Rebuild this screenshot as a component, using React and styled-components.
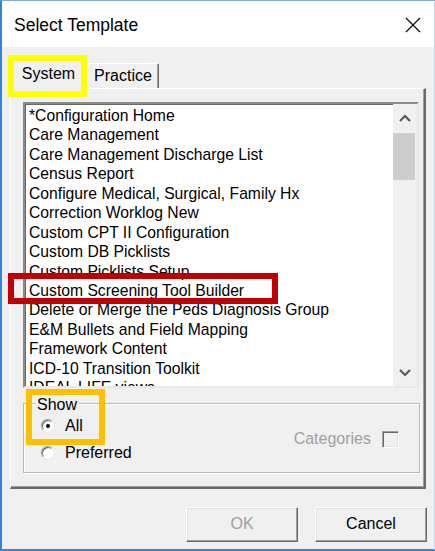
import React from "react";
import styled, { createGlobalStyle } from "styled-components";

const Global = createGlobalStyle`
  html, body { margin: 0; padding: 0; background: #f0f0f0; }
  body { font-family: "Liberation Sans", Arial, sans-serif; }
  * { box-sizing: border-box; }
`;

const Window = styled.div`
  position: relative;
  width: 435px;
  height: 551px;
  display: flex;
  flex-direction: column;
  border-left: 2px solid #2d87dc;
  border-top: 1px solid #7fa9d6;
  border-bottom: 2px solid #2d87dc;
  border-right: 1px solid #cfd8e2;
  background: #f0f0f0;
  overflow: hidden;
`;

const TitleBar = styled.div`
  height: 46px;
  flex: none;
  background: #ffffff;
  display: flex;
  align-items: center;
  justify-content: space-between;
  padding: 2px 13px 0 12px;
`;

const Title = styled.div`
  font-size: 17.5px;
  color: #000;
`;

const CloseIcon = styled.svg`
  width: 16px;
  height: 16px;
  display: block;
`;

const Body = styled.div`
  flex: 1;
  display: flex;
  flex-direction: column;
  padding: 14px 8px 7px 8px;
`;

const TabStrip = styled.div`
  display: flex;
  align-items: flex-end;
  height: 27px;
  position: relative;
  z-index: 1;
`;

const Tab = styled.div`
  height: ${(p) => (p.$active ? "28px" : "25px")};
  margin-bottom: ${(p) => (p.$active ? "-1px" : "0")};
  width: ${(p) => p.$w}px;
  padding-top: 3px;
  line-height: 18px;
  font-size: 16px;
  color: #000;
  text-align: center;
  background: #f0f0f0;
  border-top: 1px solid #ffffff;
  border-left: 1px solid #ffffff;
  border-right: 1px solid #696969;
  box-shadow: inset -1px 0 0 #a0a0a0;
  border-top-left-radius: 2px;
  border-top-right-radius: 2px;
`;

const TabPanel = styled.div`
  height: 401px;
  width: 416px;
  display: flex;
  flex-direction: column;
  padding: 13px 5px 14px 12px;
  border-top: 1px solid #ffffff;
  border-left: 1px solid #ffffff;
  border-right: 2px solid #696969;
  border-bottom: 2px solid #696969;
  box-shadow: inset -1px -1px 0 #a0a0a0;
`;

const ListBox = styled.div`
  width: 396px;
  height: 286px;
  flex: none;
  display: flex;
  background: #ffffff;
  border-top: 2px solid #8c8c8c;
  border-left: 2px solid #8c8c8c;
  border-right: 2px solid #e8e8e8;
  border-bottom: 2px solid #e8e8e8;
  box-shadow: inset 1px 1px 0 #696969;
`;

const Items = styled.div`
  flex: 1;
  overflow: hidden;
  padding: 2px 0 0 4px;
`;

const Item = styled.div`
  font-size: 15.7px;
  line-height: 19.44px;
  height: 19.44px;
  white-space: nowrap;
  color: #000;
`;

const ScrollBar = styled.div`
  width: 24px;
  flex: none;
  display: flex;
  flex-direction: column;
  background: #f0f0f0;
`;

const ArrowButton = styled.div`
  height: 27px;
  flex: none;
  display: flex;
  align-items: center;
  justify-content: center;
`;

const Track = styled.div`
  flex: 1;
  display: flex;
  flex-direction: column;
  padding: 2px 2px 0 0;
`;

const Thumb = styled.div`
  height: 47px;
  background: #cdcdcd;
`;

const GroupBox = styled.fieldset`
  margin: 6px 0 0 0;
  width: 397px;
  height: 79px;
  padding: 0 20px 6px 11px;
  border: 1px solid #b9b9b9;
  box-shadow: inset 1px 1px 0 #ffffff, 1px 1px 0 #ffffff;
  display: flex;
  align-items: center;
  min-width: 0;
`;

const Legend = styled.legend`
  font-size: 16px;
  line-height: 14px;
  padding: 4px 2px 0 2px;
  background: #f0f0f0;
  color: #000;
`;

const RadioColumn = styled.div`
  display: flex;
  flex-direction: column;
  align-self: flex-start;
  margin-left: 6px;
`;

const RadioRow = styled.label`
  height: 27px;
  display: flex;
  align-items: center;
  gap: 11px;
  font-size: 16px;
  color: #000;
`;

const RadioCircle = styled.span`
  width: 13px;
  height: 13px;
  border-radius: 50%;
  background: #ffffff;
  border: 1px solid;
  border-color: #a0a0a0 #ffffff #ffffff #a0a0a0;
  box-shadow: inset 1px 1px 0 #696969, 0 0 0 0.5px #e3e3e3;
  display: flex;
  align-items: center;
  justify-content: center;
  flex: none;
`;

const RadioDot = styled.span`
  width: 4px;
  height: 4px;
  border-radius: 50%;
  background: #000;
`;

const Spacer = styled.div`
  flex: 1;
`;

const CategoryLabel = styled.span`
  font-size: 16px;
  color: #a0a0a0;
  margin-right: 11px;
`;

const CheckBox = styled.span`
  width: 17px;
  height: 17px;
  flex: none;
  background: #f0f0f0;
  border-top: 1px solid #a0a0a0;
  border-left: 1px solid #a0a0a0;
  border-right: 1px solid #ffffff;
  border-bottom: 1px solid #ffffff;
  box-shadow: inset 1px 1px 0 #696969, inset -1px -1px 0 #e3e3e3;
`;

const ButtonRow = styled.div`
  display: flex;
  justify-content: flex-end;
  gap: 17px;
  margin-top: 18px;
  margin-right: -1px;
`;

const Button = styled.div`
  width: 112px;
  height: 35px;
  display: flex;
  align-items: center;
  justify-content: center;
  padding-bottom: 2px;
  font-size: 16px;
  color: ${(p) => (p.$disabled ? "#a0a0a0" : "#000")};
  background: #f0f0f0;
  border-top: 1px solid #ffffff;
  border-left: 1px solid #ffffff;
  border-right: 1px solid #696969;
  border-bottom: 1px solid #696969;
  box-shadow: inset -1px -1px 0 #a0a0a0, inset 1px 1px 0 #e3e3e3;
`;

const Highlight = styled.div`
  position: absolute;
  left: ${(p) => p.$x}px;
  top: ${(p) => p.$y}px;
  width: ${(p) => p.$w}px;
  height: ${(p) => p.$h}px;
  border: 6px solid ${(p) => p.$color};
  pointer-events: none;
  z-index: 5;
`;

const Chevron = ({ up }) => (
  <svg width="12" height="8" viewBox="0 0 12 8">
    <polyline
      points={up ? "1,7 6,2 11,7" : "1,1 6,6 11,1"}
      fill="none"
      stroke="#5a5a5a"
      strokeWidth="2.2"
    />
  </svg>
);

const items = [
  "*Configuration Home",
  "Care Management",
  "Care Management Discharge List",
  "Census Report",
  "Configure Medical, Surgical, Family Hx",
  "Correction Worklog New",
  "Custom CPT II Configuration",
  "Custom DB Picklists",
  "Custom Picklists Setup",
  "Custom Screening Tool Builder",
  "Delete or Merge the Peds Diagnosis Group",
  "E&M Bullets and Field Mapping",
  "Framework Content",
  "ICD-10 Transition Toolkit",
  "IDEAL LIFE views",
];

export default function App() {
  return (
    <>
      <Global />
      <Window>
        <TitleBar>
          <Title>Select Template</Title>
          <CloseIcon viewBox="0 0 16 16">
            <path d="M1 1 L15 15 M15 1 L1 15" stroke="#111" strokeWidth="1.3" />
          </CloseIcon>
        </TitleBar>
        <Body>
          <TabStrip>
            <Tab $active $w={77}>System</Tab>
            <Tab $w={72}>Practice</Tab>
          </TabStrip>
          <TabPanel>
            <ListBox>
              <Items>
                {items.map((t) => (
                  <Item key={t}>{t}</Item>
                ))}
              </Items>
              <ScrollBar>
                <ArrowButton>
                  <Chevron up />
                </ArrowButton>
                <Track>
                  <Thumb />
                </Track>
                <ArrowButton>
                  <Chevron />
                </ArrowButton>
              </ScrollBar>
            </ListBox>
            <GroupBox>
              <Legend>Show</Legend>
              <RadioColumn>
                <RadioRow>
                  <RadioCircle>
                    <RadioDot />
                  </RadioCircle>
                  All
                </RadioRow>
                <RadioRow>
                  <RadioCircle />
                  Preferred
                </RadioRow>
              </RadioColumn>
              <Spacer />
              <CategoryLabel>Categories</CategoryLabel>
              <CheckBox />
            </GroupBox>
          </TabPanel>
          <ButtonRow>
            <Button $disabled>OK</Button>
            <Button>Cancel</Button>
          </ButtonRow>
        </Body>
        <Highlight $x={6} $y={54} $w={79} $h={42} $color="#ffff00" />
        <Highlight $x={6} $y={272} $w={270} $h={31} $color="#c00000" />
        <Highlight $x={24} $y={388} $w={79} $h={56} $color="#ffc000" />
      </Window>
    </>
  );
}
